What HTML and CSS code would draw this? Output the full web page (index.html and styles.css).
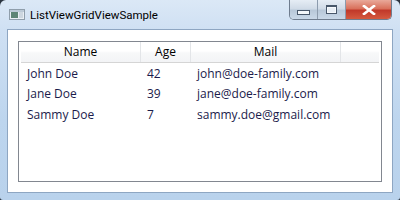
FILE: index.html
```html
<!DOCTYPE html>
<html lang="en">

<head>
    <meta charset="UTF-8">
    <title>ListViewGridViewSample</title>
    <link rel="stylesheet" href="styles.css">
</head>

<body>
    <div class="window">
        <div class="titlebar">
            <svg class="app-icon" width="16" height="11" viewBox="0 0 16 11">
                <rect x="0.5" y="0.5" width="15" height="10" fill="#e8eef4" stroke="#8f9eab" />
                <rect x="1" y="1" width="14" height="2" fill="#bccad7" />
                <rect x="2" y="3" width="7" height="6" fill="#5d8575" />
                <rect x="10" y="3" width="4" height="6" fill="#cdd7e0" />
            </svg>
            <div class="title">ListViewGridViewSample</div>
            <div class="caption-buttons">
                <div class="cap-btn min"><span class="min-glyph"></span></div>
                <div class="cap-btn max"><span class="max-glyph"></span></div>
                <div class="cap-btn close">
                    <svg width="14" height="10" viewBox="0 0 14 10">
                        <path d="M2 1 L12 9 M12 1 L2 9" stroke="#ffffff" stroke-width="2.6" stroke-linecap="square" />
                    </svg>
                </div>
            </div>
        </div>

        <div class="client">
            <div class="listview">
                <div class="lv-header">
                    <div class="col-h col-name">Name</div>
                    <div class="col-h col-age">Age</div>
                    <div class="col-h col-mail">Mail</div>
                    <div class="col-h col-fill"></div>
                </div>
                <div class="lv-body">
                    <div class="lv-row">
                        <div class="cell col-name">John Doe</div>
                        <div class="cell col-age">42</div>
                        <div class="cell col-mail">john@doe-family.com</div>
                    </div>
                    <div class="lv-row">
                        <div class="cell col-name">Jane Doe</div>
                        <div class="cell col-age">39</div>
                        <div class="cell col-mail">jane@doe-family.com</div>
                    </div>
                    <div class="lv-row">
                        <div class="cell col-name">Sammy Doe</div>
                        <div class="cell col-age">7</div>
                        <div class="cell col-mail">sammy.doe@gmail.com</div>
                    </div>
                </div>
            </div>
        </div>
    </div>
</body>

</html>
```

FILE: styles.css
```css
body {
    margin: 0;
    width: 400px;
    height: 200px;
    overflow: hidden;
    background: #2b3440;
    font-family: "Open Sans", "Noto Sans", Arial, sans-serif;
    font-size: 12px;
}

.window {
    width: 400px;
    height: 200px;
    box-sizing: border-box;
    border-radius: 6px 6px 3px 3px;
    background: linear-gradient(to bottom, #dbe8f6 0px, #cfe0f3 30px, #bdd5ee 120px, #b9d2ec 200px);
    display: flex;
    flex-direction: column;
}

.titlebar {
    height: 29px;
    display: flex;
    align-items: flex-start;
}

.app-icon {
    margin: 9px 0 0 9px;
}

.title {
    margin: 7px 0 0 5px;
    color: #000;
    font-family: Roboto, "Open Sans", sans-serif;
    font-size: 11.5px;
    line-height: 16px;
}

.caption-buttons {
    margin-left: auto;
    margin-right: 8px;
    display: flex;
    height: 19px;
    border: 1px solid #6e7c8e;
    border-top: none;
    border-radius: 0 0 5px 5px;
    overflow: hidden;
}

.cap-btn {
    display: flex;
    align-items: center;
    justify-content: center;
    height: 19px;
}

.min,
.max {
    width: 27px;
    background: linear-gradient(to bottom, #e6edf5 0%, #d0dbe7 45%, #b8c8d9 55%, #c9d8e8 100%);
    border-right: 1px solid #8c9bad;
}

.close {
    width: 45px;
    background: linear-gradient(to bottom, #e9a99a 0%, #d9715c 45%, #c1392a 55%, #d45a40 100%);
}

.min-glyph {
    width: 11px;
    height: 3px;
    margin-top: 5px;
    background: #f4f7fa;
    border: 1px solid #48576a;
}

.max-glyph {
    width: 9px;
    height: 6px;
    border: 1px solid #48576a;
    border-top-width: 2px;
    background: #e8eef5;
    box-shadow: inset 0 0 0 1px #f6f9fc;
}

.client {
    flex: 1;
    margin: 0 7px 7px 7px;
    border: 1px solid #8ea6c2;
    background: #ffffff;
    padding: 11px 10px 10px 10px;
    display: flex;
}

.listview {
    flex: 1;
    border: 1px solid #828790;
    padding: 0 2px;
    overflow: hidden;
}

.lv-header {
    display: flex;
    height: 20px;
    border-bottom: 1px solid #d5d5d5;
    background: linear-gradient(to bottom, #ffffff 0%, #ffffff 45%, #f7f8f9 55%, #f3f4f6 100%);
}

.col-h {
    box-sizing: border-box;
    border-right: 1px solid #e3e5e8;
    text-align: center;
    line-height: 20px;
    color: #000;
}

.col-name {
    width: 120px;
    flex: none;
}

.col-age {
    width: 50px;
    flex: none;
}

.col-mail {
    width: 150px;
    flex: none;
}

.col-fill {
    flex: 1;
    border-right: none;
}

.lv-row {
    display: flex;
    height: 20.5px;
    align-items: center;
}

.cell {
    box-sizing: border-box;
    padding-left: 6px;
    color: #1b1b4b;
    white-space: nowrap;
}
```
